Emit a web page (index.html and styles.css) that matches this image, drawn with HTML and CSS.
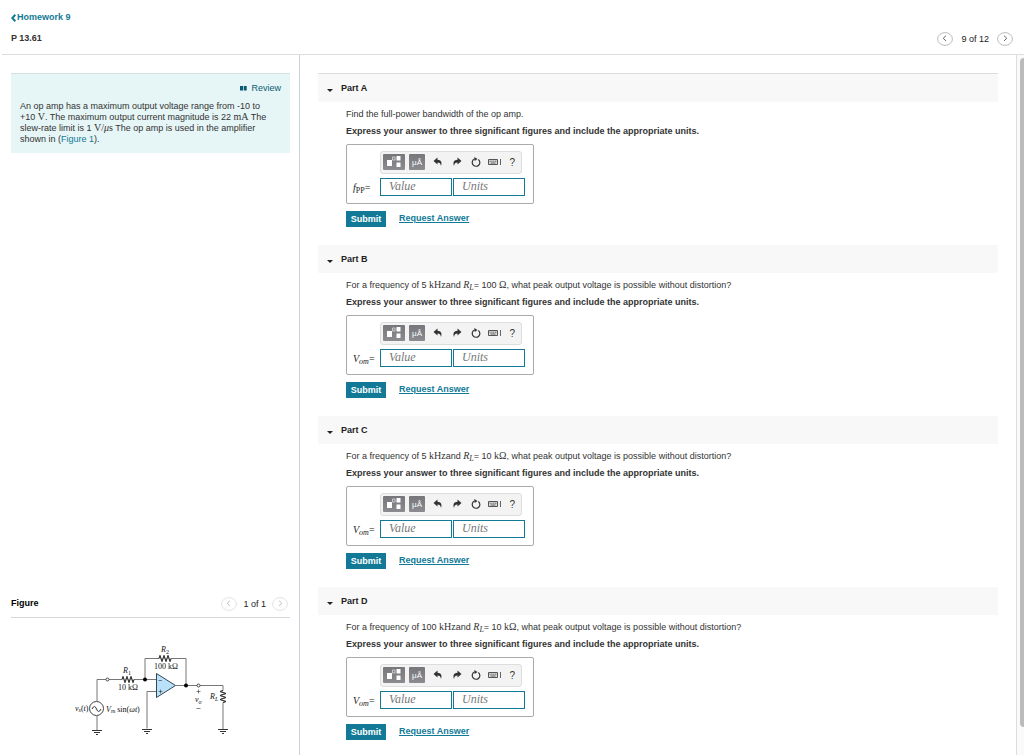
FILE: index.html
```html
<!DOCTYPE html>
<html lang="en">
<head>
<meta charset="utf-8">
<title>Homework 9 - P 13.61</title>
<link rel="stylesheet" href="styles.css">
</head>
<body>
<svg class="defs" aria-hidden="true">
  <symbol id="left" viewBox="0 0 16 14"><ellipse cx="8" cy="7" rx="7.4" ry="6.4"/><path class="arrow" d="M9 3.700 6.200 6.300 9 8.900"/></symbol>
  <symbol id="right" viewBox="0 0 16 14"><ellipse cx="8" cy="7" rx="7.4" ry="6.4"/><path class="arrow" d="M7 3.700 9.800 6.300 7 8.900"/></symbol>
  <symbol id="template" viewBox="0 0 22 16"><path fill="#fff" d="M4 6h5v6H4zM13.500 2h4v4.500h-4zM13.500 8.500h4V13h-4z"/><path fill="none" stroke="#ddd" stroke-width=".8" d="M9.500 3h2.500v3H9.500z"/></symbol>
  <symbol id="undo" viewBox="0 0 10 10"><path d="M.5 4 4.500.5v2.200C8 2.800 9.300 5 8 9 7.600 6.500 6.800 5.600 4.500 5.500V7.500z"/></symbol>
  <symbol id="redo" viewBox="0 0 10 10"><path d="M9.500 4 5.500.5v2.200C2 2.800.7 5 2 9 2.400 6.500 3.200 5.600 5.500 5.500V7.500z"/></symbol>
  <symbol id="reset" viewBox="0 0 10 10"><path fill="none" stroke="#333" stroke-width="1.200" d="M3.500 2a3.800 3.800 0 1 0 3.800.4"/><path d="M3.200 0 6.500 2 3.700 4z"/></symbol>
  <symbol id="keyboard" viewBox="0 0 14 8"><path fill="#ddd" stroke="#555" d="M.5 1.500h9v5h-9z"/><path fill="none" stroke="#555" stroke-width=".9" stroke-dasharray="1.200 .6" d="M1.500 3.200h7.500"/><path fill="none" stroke="#555" stroke-width=".9" d="M2.500 5h5M12.500 1v6"/></symbol>
</svg>

<header class="top">
  <div>
    <a class="back" href="#"><svg class="chev" viewBox="0 0 6 8"><path d="M4.300.8 1.300 4l3 3.200"/></svg>Homework 9</a>
    <h1 class="problem">P 13.61</h1>
  </div>
  <nav class="pager" aria-label="Problems">
    <button class="round" aria-label="Previous problem"><svg><use href="#left"/></svg></button>
    <span class="count">9 of 12</span>
    <button class="round" aria-label="Next problem"><svg><use href="#right"/></svg></button>
  </nav>
</header>

<main class="main">
  <aside class="side">
    <section class="intro">
      <a class="review" href="#"><svg class="book" viewBox="0 0 7 5"><path d="M0 0h3v4.500H0zM3.700 0h3v4.500h-3z"/></svg>Review</a>
      <p class="intro-text">An op amp has a maximum output voltage range from -10 to<br>+10 <span class="math">V</span>. The maximum output current magnitude is 22 <span class="math">mA</span> The<br>slew-rate limit is 1 <span class="math">V/<i>μ</i>s</span> The op amp is used in the amplifier<br>shown in (<a class="fig-link" href="#figure">Figure 1</a>).</p>
    </section>
    <section class="figure" id="figure">
      <div class="figure-head">
        <h2 class="figure-title">Figure</h2>
        <nav class="pager faint" aria-label="Figures">
          <button class="round" aria-label="Previous figure"><svg><use href="#left"/></svg></button>
          <span class="count">1 of 1</span>
          <button class="round" aria-label="Next figure"><svg><use href="#right"/></svg></button>
        </nav>
      </div>
      <svg class="circuit" viewBox="60 635 190 110" role="img" aria-label="Inverting op amp circuit">
        <g class="wire">
          <path d="M97 701v-21.500h9M109 679.500h13l1-3 2 6 2-6 2 6 2-6 2 6 1-3h24M145 679.500v-21h14l1-3 2 6 2-6 2 6 2-6 2 6 1-3h15v27M176 685.500h21M200 685.500h23v5l-3 1 6 2-6 2 6 2-6 2 6 2-3 1v27M156 691.500h-9v37M97 716v14"/>
        </g>
        <path class="resistor" d="M122 679.500l1-3 2 6 2-6 2 6 2-6 2 6 1-3M159 658.500l1-3 2 6 2-6 2 6 2-6 2 6 1-3M223 690.500l-3 1 6 2-6 2 6 2-6 2 6 2-3 1"/>
        <path class="ground" d="M92 730.500h10M94 732.500h6M96 734.500h2M142 729.500h10M144 731.500h6M146 733.500h2M218 729.500h10M220 731.500h6M222 733.500h2"/>
        <path class="amp" d="M156.500 673.500v24l19-12z"/>
        <path class="sign" d="M158.500 680.500h3.500M158.500 691.500h4M160.500 689.500v4M196.500 691.500h4M198.500 689.500v4M196.500 708.500h4"/>
        <g class="node"><circle cx="107.500" cy="679.500" r="1.500"/><circle cx="198.500" cy="685.500" r="1.500"/><circle cx="96.500" cy="708.500" r="7"/></g>
        <path class="ground" d="M92 709q2.500-5 4.500 0t4.500 0"/>
        <circle cx="145" cy="679.500" r="2"/><circle cx="186" cy="685.500" r="2"/>
        <g class="label">
          <text x="123" y="673"><tspan class="it">R</tspan><tspan class="sm" dy="2">1</tspan></text>
          <text x="161" y="652"><tspan class="it">R</tspan><tspan class="sm" dy="2">2</tspan></text>
          <text x="118" y="690">10 kΩ</text>
          <text x="154" y="669">100 kΩ</text>
          <text x="75" y="711"><tspan class="it">v</tspan><tspan class="sm it" dy="1">s</tspan><tspan dy="-1">(</tspan><tspan class="it">t</tspan>)</text>
          <text x="106" y="712"><tspan class="it">V</tspan><tspan class="sm it" dy="1">m</tspan><tspan dy="-1"> sin(</tspan><tspan class="it">ωt</tspan>)</text>
          <text x="195" y="702"><tspan class="it">v</tspan><tspan class="sm it" dy="2">o</tspan></text>
          <text x="210" y="699"><tspan class="it">R</tspan><tspan class="sm it" dy="2">L</tspan></text>
        </g>
      </svg>
    </section>
  </aside>

  <div class="parts">
    <section class="part first">
      <h2 class="part-head"><button class="toggle" aria-expanded="true"><span class="tri"></span>Part A</button></h2>
      <div class="part-body">
        <p class="question">Find the full-power bandwidth of the op amp.</p>
        <p class="instruct">Express your answer to three significant figures and include the appropriate units.</p>
        <div class="answer">
          <div class="tools"><button class="tool dark wide" aria-label="Templates"><svg><use href="#template"/></svg></button><button class="tool dark" aria-label="Units symbols">μÅ</button><button class="tool" aria-label="Undo"><svg><use href="#undo"/></svg></button><button class="tool" aria-label="Redo"><svg><use href="#redo"/></svg></button><button class="tool" aria-label="Reset"><svg><use href="#reset"/></svg></button><button class="tool keys" aria-label="Keyboard"><svg><use href="#keyboard"/></svg></button><button class="tool help" aria-label="Help">?</button></div>
          <label class="var" for="a"><i>f</i><sub>PP</sub>=</label>
          <div class="fields"><input class="field" id="a" placeholder="Value"><input class="field" aria-label="Units" placeholder="Units"></div>
        </div>
        <div class="actions"><button class="submit">Submit</button><a class="request" href="#">Request Answer</a></div>
      </div>
    </section>
    <section class="part">
      <h2 class="part-head"><button class="toggle" aria-expanded="true"><span class="tri"></span>Part B</button></h2>
      <div class="part-body">
        <p class="question">For a frequency of 5 <span class="math">kHz</span>and <span class="math"><i>R<sub>L</sub></i></span>= 100 <span class="math">Ω</span>, what peak output voltage is possible without distortion?</p>
        <p class="instruct">Express your answer to three significant figures and include the appropriate units.</p>
        <div class="answer">
          <div class="tools"><button class="tool dark wide" aria-label="Templates"><svg><use href="#template"/></svg></button><button class="tool dark" aria-label="Units symbols">μÅ</button><button class="tool" aria-label="Undo"><svg><use href="#undo"/></svg></button><button class="tool" aria-label="Redo"><svg><use href="#redo"/></svg></button><button class="tool" aria-label="Reset"><svg><use href="#reset"/></svg></button><button class="tool keys" aria-label="Keyboard"><svg><use href="#keyboard"/></svg></button><button class="tool help" aria-label="Help">?</button></div>
          <label class="var" for="b"><i>V<sub>om</sub></i>=</label>
          <div class="fields"><input class="field" id="b" placeholder="Value"><input class="field" aria-label="Units" placeholder="Units"></div>
        </div>
        <div class="actions"><button class="submit">Submit</button><a class="request" href="#">Request Answer</a></div>
      </div>
    </section>
    <section class="part">
      <h2 class="part-head"><button class="toggle" aria-expanded="true"><span class="tri"></span>Part C</button></h2>
      <div class="part-body">
        <p class="question">For a frequency of 5 <span class="math">kHz</span>and <span class="math"><i>R<sub>L</sub></i></span>= 10 <span class="math">kΩ</span>, what peak output voltage is possible without distortion?</p>
        <p class="instruct">Express your answer to three significant figures and include the appropriate units.</p>
        <div class="answer">
          <div class="tools"><button class="tool dark wide" aria-label="Templates"><svg><use href="#template"/></svg></button><button class="tool dark" aria-label="Units symbols">μÅ</button><button class="tool" aria-label="Undo"><svg><use href="#undo"/></svg></button><button class="tool" aria-label="Redo"><svg><use href="#redo"/></svg></button><button class="tool" aria-label="Reset"><svg><use href="#reset"/></svg></button><button class="tool keys" aria-label="Keyboard"><svg><use href="#keyboard"/></svg></button><button class="tool help" aria-label="Help">?</button></div>
          <label class="var" for="c"><i>V<sub>om</sub></i>=</label>
          <div class="fields"><input class="field" id="c" placeholder="Value"><input class="field" aria-label="Units" placeholder="Units"></div>
        </div>
        <div class="actions"><button class="submit">Submit</button><a class="request" href="#">Request Answer</a></div>
      </div>
    </section>
    <section class="part">
      <h2 class="part-head"><button class="toggle" aria-expanded="true"><span class="tri"></span>Part D</button></h2>
      <div class="part-body">
        <p class="question">For a frequency of 100 <span class="math">kHz</span>and <span class="math"><i>R<sub>L</sub></i></span>= 10 <span class="math">kΩ</span>, what peak output voltage is possible without distortion?</p>
        <p class="instruct">Express your answer to three significant figures and include the appropriate units.</p>
        <div class="answer">
          <div class="tools"><button class="tool dark wide" aria-label="Templates"><svg><use href="#template"/></svg></button><button class="tool dark" aria-label="Units symbols">μÅ</button><button class="tool" aria-label="Undo"><svg><use href="#undo"/></svg></button><button class="tool" aria-label="Redo"><svg><use href="#redo"/></svg></button><button class="tool" aria-label="Reset"><svg><use href="#reset"/></svg></button><button class="tool keys" aria-label="Keyboard"><svg><use href="#keyboard"/></svg></button><button class="tool help" aria-label="Help">?</button></div>
          <label class="var" for="d"><i>V<sub>om</sub></i>=</label>
          <div class="fields"><input class="field" id="d" placeholder="Value"><input class="field" aria-label="Units" placeholder="Units"></div>
        </div>
        <div class="actions"><button class="submit">Submit</button><a class="request" href="#">Request Answer</a></div>
      </div>
    </section>
  </div>
  <div class="track"><div class="thumb"></div></div>
</main>
</body>
</html>
```
FILE: styles.css
```css
* { box-sizing: border-box; }
body {
  margin: 0;
  height: 100vh;
  display: flex;
  flex-direction: column;
  overflow: hidden;
  background: #fff;
  color: #333;
  font: 9px/11px "Liberation Sans", Arial, sans-serif;
}
h1, h2, p { margin: 0; font-size: inherit; }
button, input { font: inherit; color: inherit; margin: 0; padding: 0; border: 0; background: none; }
a { color: #127a97; text-decoration: none; }
.defs { position: absolute; width: 0; height: 0; }

.top {
  display: flex;
  justify-content: space-between;
  align-items: flex-end;
  margin-left: 2px;
  padding: 12px 11px 7px 9px;
  border-bottom: 1px solid #dcdfe0;
}
.back { display: flex; align-items: center; font-weight: bold; }
.chev { width: 6px; height: 8px; fill: none; stroke: #127a97; stroke-width: 2; }
.problem { margin: 10px 0 3px; }
.pager { display: flex; align-items: center; gap: 8px; padding-bottom: 1px; }
.count { color: #222; }
.round { width: 16px; height: 14px; }
.round svg { display: block; width: 16px; height: 14px; fill: #fff; stroke: #bbb; }
.arrow { fill: none; stroke: #666; }
.faint { gap: 6px; }
.faint .round { opacity: .4; }

.main { flex: 1; display: flex; min-height: 0; }
.side {
  flex: 0 0 300px;
  display: flex;
  flex-direction: column;
  justify-content: space-between;
  padding: 18px 9px 10px 11px;
  border-right: 1px solid #ccd0d8;
}
.intro { padding: 9px 9px 8px; background: #e6f5f6; border-top: 1px solid #d6dede; }
.review { display: flex; justify-content: flex-end; align-items: center; gap: 4px; color: #0b5c72; }
.book { width: 7px; height: 5px; fill: #0b5c72; }
.intro-text { margin-top: 7px; white-space: nowrap; }
.math { font-family: "Liberation Serif", serif; font-size: 10px; line-height: 9px; }
.math sub, .var sub { font-size: 8px; line-height: 0; vertical-align: -2px; }

.figure-head {
  display: flex;
  justify-content: space-between;
  align-items: center;
  padding: 0 2px 5px 0;
  border-bottom: 1px solid #d8d8d8;
}
.figure-title { color: #000; margin-bottom: 3px; }
.circuit { display: block; width: 190px; height: 110px; margin: 17px 0 0 49px; }
.wire { fill: none; stroke: #777; }
.resistor, .ground, .sign { fill: none; stroke: #333; }
.sign { stroke-width: .6; }
.amp { fill: #b9e2fa; stroke: #345; }
.node { fill: #fff; stroke: #444; }
.label { font: 8px "Liberation Serif", serif; fill: #111; }
.it { font-style: italic; }
.sm { font-size: 6px; }

.parts { flex: 1; min-width: 0; padding: 18px 18px 0 18px; overflow: hidden; }
.part { margin-bottom: 18px; }
.part-head { background: #f8f8f8; }
.first .part-head { border-top: 1px solid #dcdcdc; }
.toggle { display: flex; align-items: center; width: 100%; height: 28px; padding: 0 9px; gap: 8px; font-weight: bold; color: #222; }
.tri { border: 3px solid transparent; border-top-color: #222; border-bottom: 0; margin-top: 4px; }
.part-body { padding: 7px 0 0 28px; }
.question { white-space: nowrap; }
.instruct { margin: 6px 0 7px; font-weight: bold; white-space: nowrap; }
.answer {
  display: grid;
  grid-template-columns: 21px 144px;
  gap: 4px 6px;
  width: max-content;
  padding: 6px 9px 7px 6px;
  border: 1px solid #aaa;
  border-radius: 2px;
}
.tools {
  grid-column: 2;
  display: flex;
  align-items: center;
  width: 142px;
  height: 23px;
  padding: 0 1px 1px 2px;
  background: #f3f3f3;
  border: 1px solid #ddd;
  border-radius: 3px;
}
.tool { display: flex; align-items: center; justify-content: center; width: 20px; height: 16px; }
.tool svg { width: 10px; height: 10px; fill: #333; }
.tool.dark { flex: none; width: 16px; color: #fff; background: linear-gradient(#77777b, #8c8c90); border-radius: 1px; font-size: 8px; }
.tool.wide { width: 22px; margin-right: 4px; }
.tool.wide svg { width: 22px; height: 16px; }
.tool.dark + .tool:not(.dark) { margin-left: 4px; }
.tool.keys svg { width: 14px; height: 8px; }
.tool.help { font-size: 10px; width: 16px; }
.var { align-self: center; white-space: nowrap; font: 10px/11px "Liberation Serif", serif; color: #222; }
.fields { display: flex; gap: 1px; }
.field {
  width: 72px;
  height: 18px;
  padding: 0 8px 1px;
  background: #fff;
  border: 1px solid #127a97;
  font: italic 12px/14px "Liberation Serif", serif;
}
.field::placeholder { color: #777; opacity: 1; }
.actions { display: flex; align-items: center; gap: 13px; margin-top: 7px; }
.submit { width: 40px; height: 16px; color: #fff; background: #127a97; font-weight: bold; }
.request { margin-bottom: 2px; font-weight: bold; text-decoration: underline; }

.track { flex: 0 0 8px; padding: 3px 0 0 3px; border-left: 1px solid #ddd; background: #fafafa; overflow: hidden; }
.thumb { width: 8px; height: 96%; border-radius: 4px; background: #bbb; }
```
